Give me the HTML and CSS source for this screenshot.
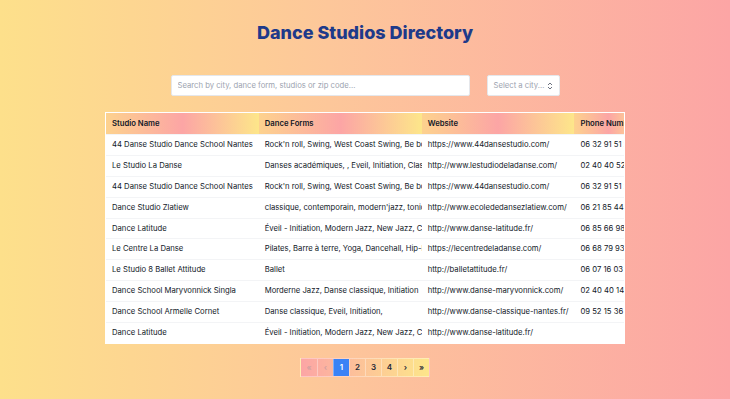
FILE: index.html
```html
<!DOCTYPE html>
<html lang="en">
<head>
  <meta charset="UTF-8">
  <title>Dance Studios Directory</title>
  <link rel="stylesheet" href="styles.css">
</head>
<body>
  <div class="page">
    <h1 class="title">Dance Studios Directory</h1>

    <div class="filters">
      <input type="text" class="search" placeholder="Search by city, dance form, studios or zip code...">
      <div class="select">
        <span>Select a city...</span>
        <svg width="6" height="8" viewBox="0 0 6 8"><path d="M1 3l2-2 2 2M1 5l2 2 2-2" fill="none" stroke="#6b7280" stroke-width="1"/></svg>
      </div>
    </div>

    <div class="table-wrap">
      <table>
        <thead>
          <tr>
            <th>Studio Name</th>
            <th>Dance Forms</th>
            <th>Website</th>
            <th>Phone Number</th>
          </tr>
        </thead>
        <tbody>
          <tr><td>44 Danse Studio Dance School Nantes</td><td class="forms">Rock'n roll, Swing, West Coast Swing, Be bop, Lindy Hop</td><td>https://www.44dansestudio.com/</td><td>06 32 91 51 20</td></tr>
          <tr><td>Le Studio La Danse</td><td class="forms">Danses académiques, , Eveil, Initiation, Classique</td><td>http://www.lestudiodeladanse.com/</td><td>02 40 40 52 14</td></tr>
          <tr><td>44 Danse Studio Dance School Nantes</td><td class="forms">Rock'n roll, Swing, West Coast Swing, Be bop, Lindy Hop</td><td>https://www.44dansestudio.com/</td><td>06 32 91 51 20</td></tr>
          <tr><td>Dance Studio Zlatiew</td><td class="forms">classique, contemporain, modern'jazz, tonic</td><td>http://www.ecolededansezlatiew.com/</td><td>06 21 85 44 10</td></tr>
          <tr><td>Dance Latitude</td><td class="forms">Éveil - Initiation, Modern Jazz, New Jazz, Contemporain</td><td>http://www.danse-latitude.fr/</td><td>06 85 66 98 12</td></tr>
          <tr><td>Le Centre La Danse</td><td class="forms">Pilates, Barre à terre, Yoga, Dancehall, Hip-Hop</td><td>https://lecentredeladanse.com/</td><td>06 68 79 93 40</td></tr>
          <tr><td>Le Studio 8 Ballet Attitude</td><td class="forms">Ballet</td><td>http://balletattitude.fr/</td><td>06 07 16 03 55</td></tr>
          <tr><td>Dance School Maryvonnick Singla</td><td class="forms">Morderne Jazz, Danse classique, Initiation</td><td>http://www.danse-maryvonnick.com/</td><td>02 40 40 14 62</td></tr>
          <tr><td>Dance School Armelle Cornet</td><td class="forms">Danse classique, Eveil, Initiation,</td><td>http://www.danse-classique-nantes.fr/</td><td>09 52 15 36 08</td></tr>
          <tr><td>Dance Latitude</td><td class="forms">Éveil - Initiation, Modern Jazz, New Jazz, Contemporain</td><td>http://www.danse-latitude.fr/</td><td></td></tr>
        </tbody>
      </table>
    </div>

    <div class="pagination">
      <span class="page-btn disabled">«</span>
      <span class="page-btn disabled">‹</span>
      <span class="page-btn active">1</span>
      <span class="page-btn">2</span>
      <span class="page-btn">3</span>
      <span class="page-btn">4</span>
      <span class="page-btn">›</span>
      <span class="page-btn">»</span>
    </div>
  </div>
</body>
</html>
```

FILE: styles.css
```css
html, body {
  margin: 0;
  padding: 0;
  height: 100%;
}
body {
  font-family: Inter, "Noto Sans", sans-serif;
  background: linear-gradient(to right, #fde08b, #fdc79a 45%, #fca5a5);
  color: #111827;
}
.page {
  display: flex;
  flex-direction: column;
  align-items: center;
  padding-top: 22px;
}
.title {
  margin: 0;
  font-size: 18px;
  font-weight: 800;
  color: #1e3a8a;
  line-height: 22px;
}
.filters {
  display: flex;
  gap: 17px;
  margin-top: 31px;
}
.search {
  width: 299px;
  height: 21px;
  box-sizing: border-box;
  border: 1px solid #e5e7eb;
  border-radius: 2px;
  padding: 0 6px;
  font-family: inherit;
  font-size: 7.7px;
  background: #fff;
  outline: none;
}
.search::placeholder {
  color: #9ca3af;
}
.select {
  width: 73px;
  height: 21px;
  box-sizing: border-box;
  border: 1px solid #e5e7eb;
  border-radius: 2px;
  background: #fff;
  display: flex;
  align-items: center;
  justify-content: space-between;
  padding: 0 6px;
  font-size: 7.7px;
  color: #9ca3af;
}
.table-wrap {
  width: 520px;
  margin-top: 16px;
  background: #fff;
  overflow: hidden;
  border: 1px solid rgba(255, 255, 255, 0.6);
  box-sizing: border-box;
}
table {
  border-collapse: collapse;
  font-size: 7.7px;
  white-space: nowrap;
}
th {
  text-align: left;
  font-weight: 600;
  padding: 5.5px 6px;
  line-height: 10px;
  background: linear-gradient(to right, #fdd28e, #fca5a5 50%, #fde68a);
}
td {
  padding: 5px 6px 4.9px;
  line-height: 10px;
  border-top: 1px solid #f3f4f6;
}
td.forms {
  max-width: 151px;
  overflow: hidden;
}
.pagination {
  display: flex;
  margin-top: 14px;
  background: linear-gradient(to right, #fca5a5, #fde68a);
  border: 1px solid rgba(255, 255, 255, 0.35);
}
.page-btn {
  width: 16px;
  height: 17px;
  display: flex;
  align-items: center;
  justify-content: center;
  font-size: 8px;
  font-weight: 600;
  color: #1f2937;
  box-sizing: border-box;
  border-left: 1px solid rgba(255, 255, 255, 0.35);
}
.page-btn:first-child {
  border-left: none;
}
.page-btn.disabled {
  color: #d1a0a0;
}
.page-btn.active {
  background: #3b82f6;
  color: #fff;
}
```
